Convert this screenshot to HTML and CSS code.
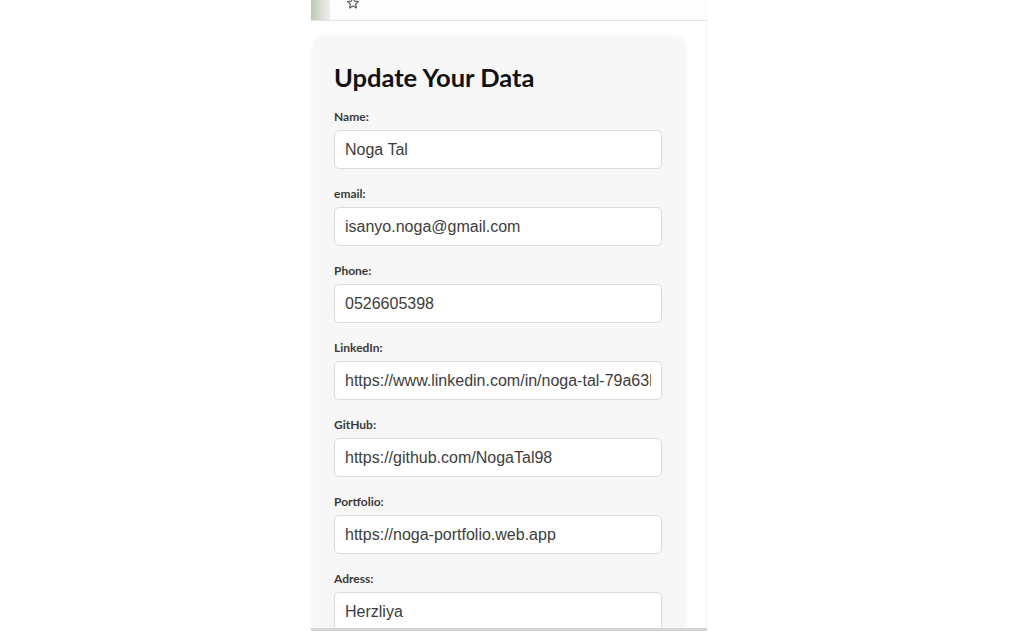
FILE: index.html
```html
<!DOCTYPE html>
<html lang="en">
<head>
<meta charset="utf-8">
<title>Update Your Data</title>
<link rel="stylesheet" href="styles.css">
</head>
<body>
<div class="frame">
  <div class="topbar">
    <div class="tab-edge"></div>
    <div class="omnibox">
      <svg class="star" width="14" height="14" viewBox="0 0 24 24" aria-hidden="true">
        <path d="M12 2.8l2.8 5.9 6.4.8-4.7 4.4 1.2 6.4L12 17.2l-5.7 3.1 1.2-6.4-4.7-4.4 6.4-.8z" fill="none" stroke="#5f6368" stroke-width="2.2" stroke-linejoin="round"/>
      </svg>
    </div>
  </div>
  <div class="viewport">
    <form class="card">
      <h1 class="title">Update Your Data</h1>
      <div class="field">
        <label class="label">Name:</label>
        <input class="input" type="text" value="Noga Tal">
      </div>
      <div class="field">
        <label class="label">email:</label>
        <input class="input" type="text" value="isanyo.noga@gmail.com">
      </div>
      <div class="field">
        <label class="label">Phone:</label>
        <input class="input" type="text" value="0526605398">
      </div>
      <div class="field">
        <label class="label">LinkedIn:</label>
        <input class="input" type="text" value="https://www.linkedin.com/in/noga-tal-79a63b1a3">
      </div>
      <div class="field">
        <label class="label">GitHub:</label>
        <input class="input" type="text" value="https://github.com/NogaTal98">
      </div>
      <div class="field">
        <label class="label">Portfolio:</label>
        <input class="input" type="text" value="https://noga-portfolio.web.app">
      </div>
      <div class="field">
        <label class="label">Adress:</label>
        <input class="input" type="text" value="Herzliya">
      </div>
    </form>
  </div>
  <div class="bottombar"></div>
</div>
</body>
</html>
```
FILE: styles.css
```css
html, body {
  margin: 0;
  padding: 0;
  background: #ffffff;
  height: 100%;
  overflow: hidden;
}

.frame {
  margin-left: 311px;
  width: 396px;
  height: 631px;
  display: flex;
  flex-direction: column;
}

.topbar {
  height: 20px;
  flex: 0 0 20px;
  display: flex;
  border-bottom: 1px solid #e4e4e4;
  background: linear-gradient(to right, #b9c9b1 0, #dde2da 12px, #eeeeee 19px, #fbfbfb 19px);
}

.tab-edge {
  width: 19px;
  flex: 0 0 19px;
}

.omnibox {
  flex: 1;
  background: #fdfdfd;
  border-bottom-left-radius: 12px;
  position: relative;
  overflow: hidden;
}

.star {
  position: absolute;
  left: 16px;
  top: -4px;
}

.viewport {
  flex: 1;
  overflow: hidden;
  padding: 16px 0 0 2px;
  background: #ffffff;
  border-right: 1px solid #f3f3f3;
}

.card {
  width: 372px;
  box-sizing: border-box;
  padding: 25px 21px 20px 21px;
  background: #f7f7f7;
  border-radius: 12px;
  box-shadow: 0 0 6px rgba(0, 0, 0, 0.06);
}

.title {
  margin: 0 0 18px 0;
  font-family: Lato, "Noto Sans", sans-serif;
  font-weight: 700;
  font-size: 25.5px;
  line-height: 30px;
  color: #111111;
}

.field {
  display: flex;
  flex-direction: column;
  margin-bottom: 18px;
}

.label {
  display: block;
  font-family: Lato, "Noto Sans", sans-serif;
  font-weight: 700;
  font-size: 12px;
  line-height: 13px;
  color: #3a3a3a;
  margin-bottom: 7px;
}

.input {
  box-sizing: border-box;
  width: 328px;
  height: 39px;
  margin: 0;
  padding: 0 10px;
  border: 1px solid #dcdcdc;
  border-radius: 5px;
  background: #ffffff;
  font-family: "Liberation Sans", Arial, sans-serif;
  font-size: 16px;
  color: #3d3d3d;
  outline: none;
}

.bottombar {
  flex: 0 0 3px;
  height: 3px;
  background: #d4d4d4;
}
```
